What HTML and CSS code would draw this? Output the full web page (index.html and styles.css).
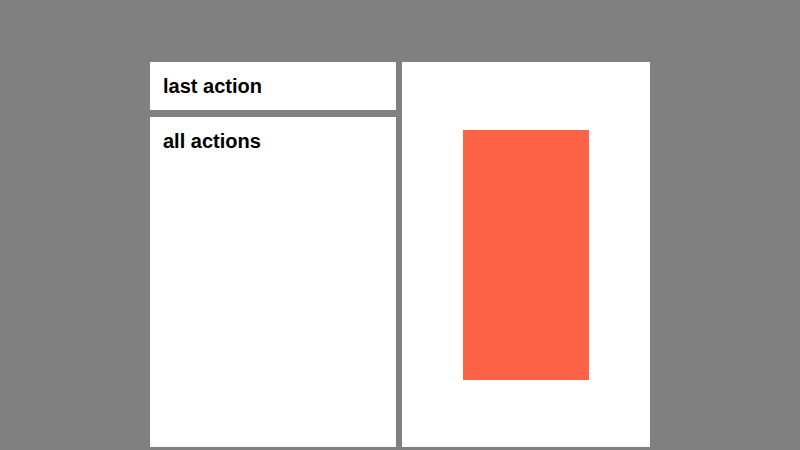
FILE: index.html
```html
<!DOCTYPE html>
<html lang="en">
<head>
    <meta charset="UTF-8">
    <meta name="viewport" content="width=device-width, initial-scale=1.0">
    <title>Actions</title>
    <link rel="stylesheet" href="styles.css">
</head>
<body>

    <div class="board">
        <!-- Log column -->
        <div class="log">
            <div class="panel last">
                <h2>last action</h2>
            </div>
            <div class="panel all">
                <h2>all actions</h2>
            </div>
        </div>

        <!-- Stage -->
        <div class="panel stage">
            <div class="box"></div>
        </div>
    </div>

</body>
</html>
```

FILE: styles.css
```css
body {
    font-family: "Liberation Sans", Arial, sans-serif;
    margin: 0;
    padding: 0;
    background-color: #808080;
}

.board {
    display: flex;
    gap: 6px;
    width: 500px;
    height: 385px;
    margin: 62px auto 0;
}

.log {
    display: flex;
    flex-direction: column;
    gap: 7px;
    width: 246px;
}

.panel {
    background-color: white;
    box-sizing: border-box;
}

.panel h2 {
    margin: 0;
    font-size: 20px;
    font-weight: bold;
    color: black;
    padding: 13px 13px;
}

.last {
    height: 48px;
}

.all {
    flex: 1;
}

.stage {
    width: 248px;
    display: flex;
    align-items: center;
    justify-content: center;
}

.box {
    width: 126px;
    height: 250px;
    background-color: tomato;
}
```
